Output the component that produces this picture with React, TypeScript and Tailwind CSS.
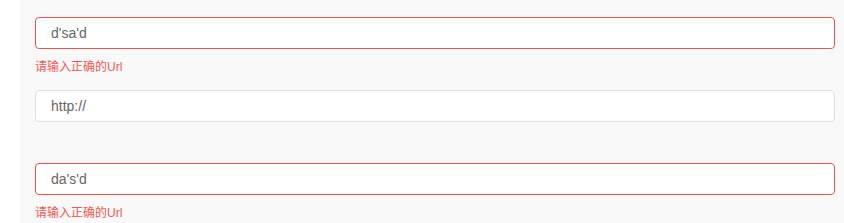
const font = { fontFamily: '"Liberation Sans", "Noto Sans CJK SC", sans-serif' };

type Item = { value: string; error?: string };

const items: Item[] = [
  { value: "d'sa'd", error: "请输入正确的Url" },
  { value: "http://" },
  { value: "da's'd", error: "请输入正确的Url" },
];

export default function App() {
  return (
    <div className="flex h-[223px] w-[844px] overflow-hidden bg-white" style={font}>
      <div className="w-[20px] shrink-0" />
      <div className="flex-1 bg-[#f9f9f9] pl-[15px] pr-[9px] pt-[17px]">
        {items.map((item, i) => (
          <div key={i} className="h-[73px]">
            <input
              defaultValue={item.value}
              className={`block h-[32px] w-full rounded-[4px] border bg-white px-[15px] text-[14px] text-[#666666] outline-none ${
                item.error ? "border-[#ef5550]" : "border-[#dcdfe6]"
              }`}
            />
            {item.error && (
              <div className="pt-[11px] text-[12px] leading-[14px] text-[#f05a52]">{item.error}</div>
            )}
          </div>
        ))}
      </div>
    </div>
  );
}
